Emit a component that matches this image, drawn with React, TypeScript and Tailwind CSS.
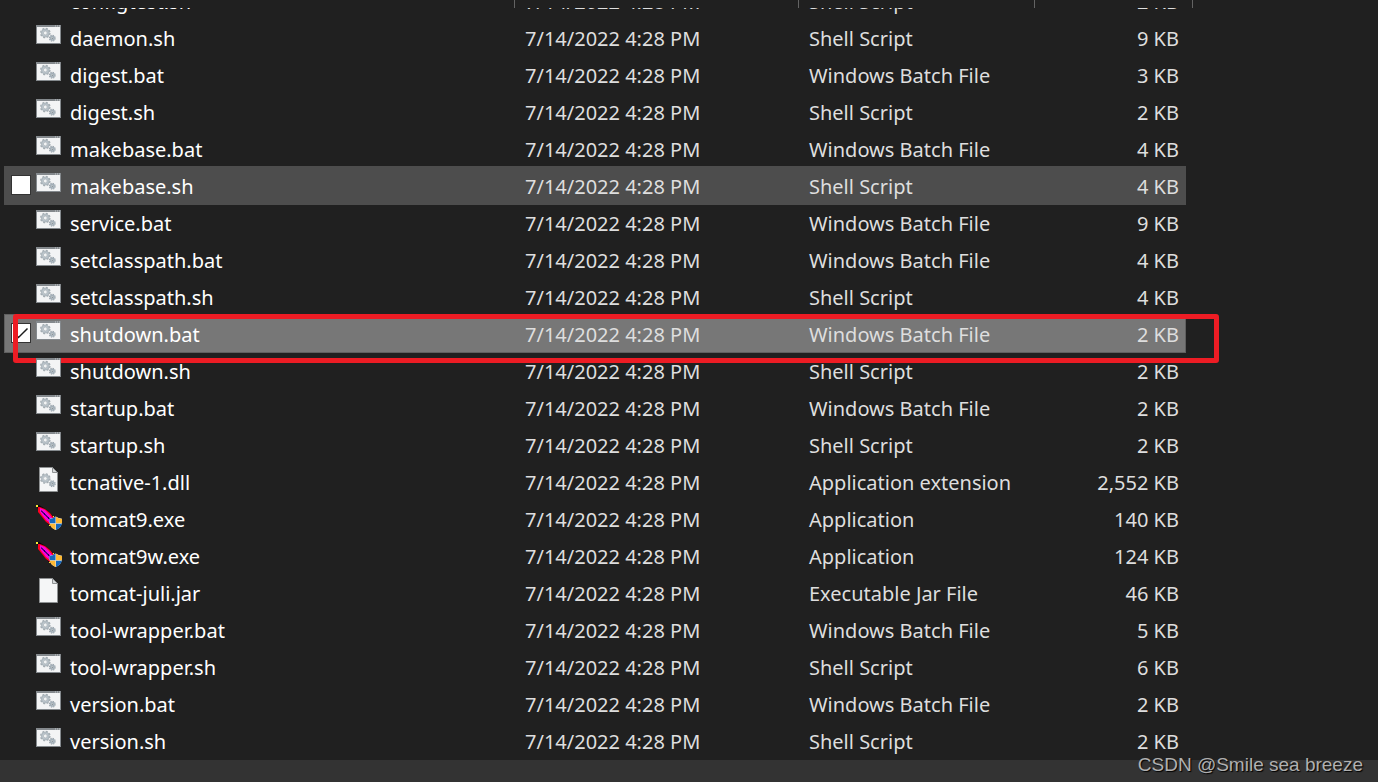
type Kind = "script" | "library" | "tomcat" | "blank";

interface FileEntry {
  name: string;
  type: string;
  size: string;
  kind: Kind;
  state?: "hovered" | "selected";
}

const MODIFIED = "7/14/2022 4:28 PM";

const sh = (name: string, size: string, state?: FileEntry["state"]): FileEntry => ({
  name,
  type: "Shell Script",
  size,
  kind: "script",
  state,
});
const bat = (name: string, size: string, state?: FileEntry["state"]): FileEntry => ({
  name,
  type: "Windows Batch File",
  size,
  kind: "script",
  state,
});

const files: FileEntry[] = [
  sh("configtest.sh", "2 KB"),
  sh("daemon.sh", "9 KB"),
  bat("digest.bat", "3 KB"),
  sh("digest.sh", "2 KB"),
  bat("makebase.bat", "4 KB"),
  sh("makebase.sh", "4 KB", "hovered"),
  bat("service.bat", "9 KB"),
  bat("setclasspath.bat", "4 KB"),
  sh("setclasspath.sh", "4 KB"),
  bat("shutdown.bat", "2 KB", "selected"),
  sh("shutdown.sh", "2 KB"),
  bat("startup.bat", "2 KB"),
  sh("startup.sh", "2 KB"),
  { name: "tcnative-1.dll", type: "Application extension", size: "2,552 KB", kind: "library" },
  { name: "tomcat9.exe", type: "Application", size: "140 KB", kind: "tomcat" },
  { name: "tomcat9w.exe", type: "Application", size: "124 KB", kind: "tomcat" },
  { name: "tomcat-juli.jar", type: "Executable Jar File", size: "46 KB", kind: "blank" },
  bat("tool-wrapper.bat", "5 KB"),
  sh("tool-wrapper.sh", "6 KB"),
  bat("version.bat", "2 KB"),
  sh("version.sh", "2 KB"),
];

function Gears() {
  return (
    <g fill="none">
      <circle cx="9.3" cy="8" r="4.6" stroke="#a3acb2" strokeWidth="1.4" strokeDasharray="2 1.61" />
      <circle cx="9.3" cy="8" r="3.1" stroke="#b9c3ca" strokeWidth="2" />
      <circle cx="9.3" cy="8" r="4" stroke="#98a2a9" strokeWidth="0.5" />
      <circle cx="9.3" cy="8" r="1.9" fill="#f2f4f5" stroke="#98a2a9" strokeWidth="0.6" />
      <circle cx="16.3" cy="13.2" r="2.9" stroke="#98a2a9" strokeWidth="1.1" strokeDasharray="1.3 0.98" />
      <circle cx="16.3" cy="13.2" r="1.8" stroke="#a3afb8" strokeWidth="1.7" />
      <circle cx="16.3" cy="13.2" r="0.8" fill="#7b868d" />
    </g>
  );
}

function ScriptIcon() {
  return (
    <svg width="26" height="26" viewBox="0 0 26 26" aria-hidden="true">
      <g transform="translate(0 2)">
        <rect width="25" height="19" fill="#84898d" />
        <rect x="1" y="2" width="23" height="16" fill="#f3f4f5" />
        <path d="M19 1h1M21 1h1M23 1h1" stroke="#c5c9cc" strokeWidth="1" />
        <Gears />
      </g>
    </svg>
  );
}

function PageIcon({ gears = false }: { gears?: boolean }) {
  return (
    <svg width="26" height="26" viewBox="0 0 26 26" aria-hidden="true">
      <path d="M3.5 0.5H16.5L21.5 5.5V24.5H3.5Z" fill="#f5f6f7" stroke="#8e9192" />
      <path d="M16.5 0.5V5.5H21.5Z" fill="#d5d8da" stroke="#8e9192" />
      {gears && (
        <g transform="translate(0 3.5)">
          <Gears />
        </g>
      )}
    </svg>
  );
}

function TomcatIcon() {
  return (
    <svg width="26" height="26" viewBox="0 0 26 26" aria-hidden="true">
      <g transform="translate(0 1)">
        <path d="M0 0H3L8 3L13 7L18 12L20 16L14 21L11 18L7 13L3 8L2 4Z" fill="#0b0508" />
        <path d="M2 2H4L9 4L14 8L18 13V16L14 20L10 17L6 12L2 7Z" fill="#ff0022" />
        <path d="M4 3L9 5L13 9L17 14V17L14 18L10 15L6 10L4 7Z" fill="#fb00dc" />
        <path d="M5 6h1v1h1v1h1v1h1v1h1v1h1v1h1v1h1v1h1v1h1" fill="none" stroke="#24005e" strokeWidth="1" />
        <path d="M7 8h1v2h1v-2zM11 12h1v2h1v-2z" fill="#24005e" />
        <path d="M0 0h2v2H0zM17 11h1v1h-1zM13 20h1v1h-1z" fill="#f4ed37" />
        <path d="M19.700 11.500Q17 13.500 13.500 13.700V18H26V13.700Q22.500 13.500 19.700 11.500Z" fill="#e9edee" />
        <path d="M13.500 17Q13.500 22 19.700 25Q26 22 26 17Z" fill="#e9edee" />
        <path d="M19.500 11.700Q17 13.800 13.500 13.900V18.200H19.500Z" fill="#1568bd" />
        <path d="M20 11.700Q22.500 13.800 26 13.900V18.200H20Z" fill="#fdb934" />
        <path d="M13.500 18.700H19.500V25Q14.500 22.500 13.500 18.700Z" fill="#fdb934" />
        <path d="M20 18.700H26Q25 22.500 20 25Z" fill="#1568bd" />
      </g>
    </svg>
  );
}

function FileIcon({ kind }: { kind: Kind }) {
  if (kind === "script") return <ScriptIcon />;
  if (kind === "tomcat") return <TomcatIcon />;
  return <PageIcon gears={kind === "library"} />;
}

function FileRow({ file }: { file: FileEntry }) {
  const tone =
    file.state === "selected"
      ? "bg-[#777777] outline outline-[#5f5f5f]"
      : file.state === "hovered"
        ? "bg-[#4d4d4d] outline outline-[#4d4d4d]"
        : "";
  const id = `select-${file.name}`;
  return (
    <tr className={`group relative h-[37px] ${tone}`}>
      <td className="p-0">
        <div className="flex h-[37px] items-start pl-1.5">
          <span className="mt-2 grid size-5 shrink-0">
            <input
              id={id}
              type="checkbox"
              defaultChecked={file.state === "selected"}
              className={`peer col-start-1 row-start-1 size-5 appearance-none border border-[#333333] bg-white ${
                file.state ? "" : "opacity-0 group-hover:opacity-100"
              }`}
            />
            <svg
              viewBox="0 0 20 20"
              className="pointer-events-none col-start-1 row-start-1 size-5 opacity-0 peer-checked:opacity-100"
              aria-hidden="true"
            >
              <path d="M4 10.500L7.500 14.500L16.500 5.500" fill="none" stroke="#1c1c1c" strokeWidth="1.500" />
            </svg>
          </span>
          <span className="mt-1 ml-[5px] w-[34px] shrink-0">
            <FileIcon kind={file.kind} />
          </span>
          <label htmlFor={id} className="mt-1.5 text-white">
            {file.name}
          </label>
        </div>
        {file.state === "selected" && (
          <span className="pointer-events-none absolute top-[-1px] right-[-34px] bottom-[-11px] left-2 rounded-[3px] border-5 border-[#ed1c24]" />
        )}
      </td>
      <td className="p-0 pt-0.5 pl-[11px]">{MODIFIED}</td>
      <td className="p-0 pt-0.5 pl-[11px]">{file.type}</td>
      <td className="p-0 pt-0.5 pr-1.5 text-right">{file.size}</td>
    </tr>
  );
}

export default function App() {
  return (
    <div className="relative flex min-h-screen flex-col bg-[#202020] font-['Noto_Sans','Open_Sans',sans-serif] text-[20px] leading-7 text-[#dedede]">
      <div className="flex h-2 shrink-0 pr-[185px]">
        <div className="flex-1 border-r border-[#636363]" />
        <div className="w-[284px] border-r border-[#636363]" />
        <div className="w-[236px] border-r border-[#636363]" />
        <div className="w-[158px] border-r border-[#636363]" />
      </div>
      <main className="flex-1 overflow-hidden pr-[193px] pb-px pl-[5px]">
        <table className="-mt-[26px] w-full table-fixed border-collapse whitespace-nowrap">
          <colgroup>
            <col />
            <col className="w-[284px]" />
            <col className="w-[236px]" />
            <col className="w-[151px]" />
          </colgroup>
          <tbody>
            {files.map((file) => (
              <FileRow key={file.name} file={file} />
            ))}
          </tbody>
        </table>
      </main>
      <footer className="h-[22px] shrink-0 bg-[#333333]" />
      <p className="absolute right-[15px] bottom-[3px] font-['Liberation_Sans',sans-serif] text-[19px] text-[#b0b0b0] [text-shadow:1px_1px_1px_#000000]">
        CSDN @Smile sea breeze
      </p>
    </div>
  );
}
